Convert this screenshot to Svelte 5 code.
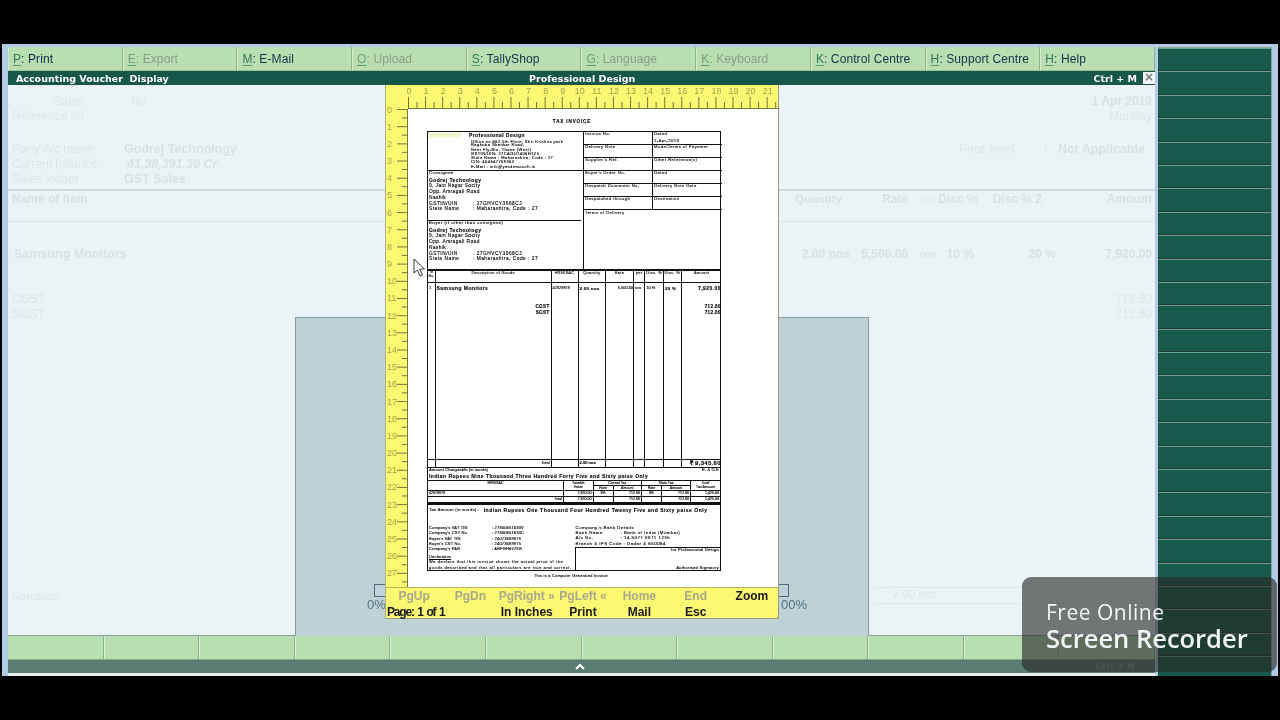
<script>
  const topButtons = [
    { key: "P", label: "Print", on: true },
    { key: "E", label: "Export" },
    { key: "M", label: "E-Mail", on: true },
    { key: "O", label: "Upload" },
    { key: "S", label: "TallyShop", on: true },
    { key: "G", label: "Language" },
    { key: "K", label: "Keyboard" },
    { key: "K", label: "Control Centre", on: true },
    { key: "H", label: "Support Centre", on: true },
    { key: "H", label: "Help", on: true }
  ];
  const sideRows = Array.from({ length: 27 });
  const bottomCells = Array.from({ length: 12 });

  const cmX = Array.from({ length: 22 }, (_, i) => i);
  const cmY = Array.from({ length: 28 }, (_, i) => i);
  const stepX = 17.08;
  const stepY = 17.18;

  const upper = [
    { label: "PgUp" },
    { label: "PgDn" },
    { label: "PgRight »" },
    { label: "PgLeft «" },
    { label: "Home" },
    { label: "End" },
    { label: "Zoom", on: true }
  ];
  const lower = ["In Inches", "Print", "Mail", "Esc", ""];

  const details = [
    ["Invoice No.", "Dated", "1-Apr-2019"],
    ["Delivery Note", "Mode/Terms of Payment", ""],
    ["Supplier's Ref.", "Other Reference(s)", ""],
    ["Buyer's Order No.", "Dated", ""],
    ["Despatch Document No.", "Delivery Note Date", ""],
    ["Despatched through", "Destination", ""]
  ];
  const party = ["9, Jain Nagar Socity", "Opp. Amragali Road", "Nashik"];
  const statutory = [
    ["Company's VAT TIN", "27800651630V"],
    ["Company's CST No.", "27800651630C"],
    ["Buyer's VAT TIN", "24073688975"],
    ["Buyer's CST No.", "24073688975"],
    ["Company's PAN", "ABFGH6578G"]
  ];
</script>

<div class="screen">
  <div class="window">
    <div class="main">
      <nav class="topbar">
        {#each topButtons as b}
          <div class="topbtn" class:on={b.on}><u>{b.key}</u>: {b.label}</div>
        {/each}
      </nav>
      <header class="titlebar">
        <span class="t-left">Accounting Voucher&nbsp; Display</span>
        <span class="t-mid">Professional Design</span>
        <span class="t-right">Ctrl + M</span>
        <span class="close">×</span>
      </header>

      <section class="form">
        <div class="line meta">
          <span class="sales">Sales</span><span class="no">No</span>
          <b class="end">1 Apr 2019</b>
        </div>
        <div class="line meta">
          <span>Reference no</span>
          <span class="end">Monday</span>
        </div>
        <div class="line party first">
          <span class="lab">Party A/c name</span><b>Godrej Technology</b>
          <span class="price">Price level</span><sup>1</sup><b class="na">Not Applicable</b>
        </div>
        <div class="line party">
          <span class="lab">Current balance</span><b class="bal">41,38,391.30 Cr</b>
        </div>
        <div class="line party">
          <span class="lab">Sales ledger</span><b>GST Sales</b>
        </div>

        <div class="cols heads">
          <b class="nh">Name of Item</b>
          <b class="r qh">Quantity</b>
          <b class="r">Rate</b>
          <span class="per">per</span>
          <b class="r dh">Disc %</b>
          <b class="r d2h">Disc % 2</b>
          <b class="r">Amount</b>
        </div>
        <div class="cols item">
          <b class="nm">Samsung Monitors</b>
          <b class="r">2.00 nos</b>
          <b class="r">5,500.00</b>
          <b class="per">nos</b>
          <b class="r">10 %</b>
          <b class="r">20 %</b>
          <b class="r">7,920.00</b>
        </div>
        <div class="line tax first"><span>CGST</span><span class="end">712.80</span></div>
        <div class="line tax"><span>SGST</span><span class="end">712.80</span></div>

        <div class="foot">
          <span>Narration</span>
          <div class="totals"><span>2.00 nos</span></div>
        </div>
      </section>

      <div class="bottombar">
        {#each bottomCells as _}
          <div class="bottomcell"></div>
        {/each}
      </div>
      <div class="statusbar">
        <svg class="chevron" width="10" height="7" viewBox="0 0 10 7"><path d="M1 6 L5 2 L9 6" fill="none" stroke="#fff" stroke-width="2"/></svg>
        <span class="ctrl">Ctrl + N</span>
      </div>
      <div class="whiteline"></div>
    </div>

    <aside class="side">
      {#each sideRows as _}
        <div class="siderow"></div>
      {/each}
    </aside>
  </div>

  <!-- print dialog behind the preview -->
  <div class="dialog">
    <div class="box box-l"></div>
    <span class="pct pct-l">0%</span>
    <div class="box box-r"></div>
    <span class="pct pct-r">00%</span>
  </div>

  <!-- yellow preview window -->
  <div class="preview">
    <svg class="ruler-top" width="394" height="24">
      <line x1="23" y1="23.5" x2="394" y2="23.5" stroke="#77773a" />
      {#each cmX as n}
        <text x={24 + n * stepX} y="9" text-anchor="middle">{n}</text>
        <line x1={23.5 + n * stepX} y1="12" x2={23.5 + n * stepX} y2="23" stroke="#77773a" />
        <line x1={32 + n * stepX} y1="17" x2={32 + n * stepX} y2="23" stroke="#77773a" />
      {/each}
    </svg>
    <div class="preview-body">
      <svg class="ruler-left" width="23" height="478">
        <line x1="22.5" y1="0" x2="22.5" y2="478" stroke="#77773a" />
        {#each cmY as n}
          <text x="2" y={n * stepY + 3.5}>{n}</text>
          <line x1="12" y1={0.5 + n * stepY} x2="23" y2={0.5 + n * stepY} stroke="#77773a" />
          <line x1="17" y1={9 + n * stepY} x2="23" y2={9 + n * stepY} stroke="#77773a" />
        {/each}
      </svg>

      <div class="page">
        <div class="doc-title">TAX INVOICE</div>
        <div class="inv">
          <div class="top">
            <div class="top-left">
              <div class="company">
                <div class="logo"></div>
                <div class="co-text">
                  <b class="big co-name">Professional Design</b>
                  <p>Office no.662,5th Floor, Shri Krishna park</p>
                  <p>Raghuba Shankar Road,</p>
                  <p class="gap">Near Fly-Bin, Thane (West)</p>
                  <p>GSTIN/UIN: 27CAGU1406H1Z5</p>
                  <p>State Name : Maharashtra, Code : 27</p>
                  <p class="gap">CIN: 464647708363</p>
                  <p class="gap">E-Mail : info@yesdemosoft.in</p>
                </div>
              </div>
              <div class="addr consignee">
                <p class="cap">Consignee</p>
                <b class="big">Godrej Technology</b>
                {#each party as line}<p class="wide">{line}</p>{/each}
                <p class="kv"><span>GSTIN/UIN</span><span>: 27GHVCY3968CJ</span></p>
                <p class="kv"><span>State Name</span><span>: Maharashtra, Code : 27</span></p>
              </div>
              <div class="addr buyer">
                <p class="cap">Buyer (if other than consignee)</p>
                <b class="big">Godrej Technology</b>
                {#each party as line}<p class="wide">{line}</p>{/each}
                <p class="kv"><span>GSTIN/UIN</span><span>: 27GHVCY3968CJ</span></p>
                <p class="kv"><span>State Name</span><span>: Maharashtra, Code : 27</span></p>
              </div>
            </div>
            <div class="top-right">
              {#each details as row}
                <div class="detail">
                  <div><p>{row[0]}</p></div>
                  <div><p>{row[1]}</p>{#if row[2]}<p class="val">{row[2]}</p>{/if}</div>
                </div>
              {/each}
              <div class="terms"><p>Terms of Delivery</p></div>
            </div>
          </div>

          <div class="igrid ihead">
            <div class="sl"><p>Sl</p><p>No.</p></div>
            <div>Description of Goods</div>
            <div>HSN/SAC</div>
            <div>Quantity</div>
            <div>Rate</div>
            <div>per</div>
            <div>Disc. %</div>
            <div>Disc. %</div>
            <div>Amount</div>
          </div>
          <div class="igrid ibody">
            <div>1</div>
            <div class="desc">
              <b class="big">Samsung Monitors</b>
              <b class="taxname cg">CGST</b>
              <b class="taxname">SGST</b>
            </div>
            <div class="hsn">42829878</div>
            <div class="qty"><b>2.00 nos</b></div>
            <div class="hsn rt">5,500.00</div>
            <div class="hsn">nos</div>
            <div class="hsn">10 %</div>
            <div class="qty"><b>20 %</b></div>
            <div class="amt">
              <b class="big">7,920.00</b>
              <b class="taxname cg">712.80</b>
              <b class="taxname">712.80</b>
            </div>
          </div>
          <div class="igrid itotal">
            <div></div>
            <div class="rt">Total</div>
            <div></div>
            <div><b>2.00 nos</b></div>
            <div></div><div></div><div></div><div></div>
            <div class="grand"><b>₹ 9,345.60</b></div>
          </div>

          <div class="lower">
            <div class="words"><span>Amount Chargeable (in words)</span><span>E. &amp; O.E</span></div>
            <b class="big words-val">Indian Rupees Nine Thousand Three Hundred Forty Five and Sixty paise Only</b>

            <div class="taxgrid">
              <div class="span2 ctr">HSN/SAC</div>
              <div class="span2 ctr">Taxable<br />Value</div>
              <div class="h2 ctr">Central Tax</div>
              <div class="h2 ctr">State Tax</div>
              <div class="span2 ctr">Total<br />Tax Amount</div>
              <div class="ctr">Rate</div><div class="ctr">Amount</div>
              <div class="ctr">Rate</div><div class="ctr">Amount</div>
              <div>42829878</div><div class="rt">7,920.00</div><div class="ctr">9%</div><div class="rt">712.80</div><div class="ctr">9%</div><div class="rt">712.80</div><div class="rt">1,425.60</div>
              <div class="rt">Total</div><div class="rt">7,920.00</div><div></div><div class="rt">712.80</div><div></div><div class="rt">712.80</div><div class="rt">1,425.60</div>
            </div>

            <div class="taxwords"><span>Tax Amount (in words) :</span><b class="big">Indian Rupees One Thousand Four Hundred Twenty Five and Sixty paise Only</b></div>

            <div class="closing">
              <div class="close-left">
                {#each statutory as row}
                  <p class="kv2"><span>{row[0]}</span><span>: {row[1]}</span></p>
                {/each}
                <p class="decl"><u>Declaration</u></p>
                <p class="long">We declare that this invoice shows the actual price of the</p>
                <p class="long">goods described and that all particulars are true and correct.</p>
              </div>
              <div class="close-right">
                <div class="bank">
                  <p>Company's Bank Details</p>
                  <p class="kv3"><span>Bank Name</span><span>: Bank of India (Mumbai)</span></p>
                  <p class="kv3"><span>A/c No.</span><span>: 14.5077 8871 1255</span></p>
                  <p>Branch &amp; IFS Code : Dadar &amp; 650064</p>
                </div>
                <div class="sign">
                  <p>for Professional Design</p>
                  <p>Authorised Signatory</p>
                </div>
              </div>
            </div>
          </div>
        </div>
        <div class="generated">This is a Computer Generated Invoice</div>
      </div>
    </div>

    <div class="keys">
      {#each upper as k}
        <span class:on={k.on}>{k.label}</span>
      {/each}
      <span class="on pageno">Page: 1 of 1</span>
      {#each lower as k}
        <span class="on">{k}</span>
      {/each}
    </div>
  </div>

  <!-- mouse pointer -->
  <svg class="cursor" width="13" height="19" viewBox="0 0 13 19">
    <path d="M1 1 L1 15 L4.4 12 L7 18 L9.4 17 L6.8 11.2 L11.5 11 Z" fill="#fff" stroke="#3a3a3a" stroke-width="1"/>
  </svg>

  <div class="recorder">
    <span class="rec-1">Free Online</span>
    <span class="rec-2">Screen Recorder</span>
  </div>
</div>

<style>
  :global(body) {
    margin: 0;
    background: #000;
  }
  * {
    box-sizing: border-box;
  }
  p {
    margin: 0;
  }
  .screen {
    position: relative;
    width: 1280px;
    height: 720px;
    padding-top: 44px;
    background: #000;
    font-family: "Liberation Sans", Arial, sans-serif;
    overflow: hidden;
    filter: blur(0.35px);
  }
  .window {
    display: flex;
    gap: 3px;
    width: 1276px;
    height: 632px;
    margin: 0 2px;
    padding: 3px 6px 0;
    background: #b4cbe6;
  }
  .main {
    display: flex;
    flex-direction: column;
    width: 1147px;
    flex: none;
  }

  /* top buttons */
  .topbar {
    display: grid;
    grid-template-columns: repeat(10, 1fr);
    height: 24px;
    flex: none;
    background: #b9deb1;
  }
  .topbtn {
    padding: 4px 0 0 4px;
    font-size: 12px;
    letter-spacing: 0.1px;
    line-height: 16px;
    color: #86a088;
    border-right: 1px solid #8fb38c;
    border-left: 1px solid #d2eccc;
    border-bottom: 1px solid #9cc097;
    white-space: nowrap;
  }
  .topbtn.on {
    color: #16304a;
  }
  .topbtn u {
    color: #7c9b80;
    text-decoration-color: #5e9a70;
    text-underline-offset: 2px;
  }
  .topbtn.on u {
    color: #2f7a55;
  }

  .titlebar {
    position: relative;
    display: flex;
    align-items: center;
    justify-content: space-between;
    height: 14px;
    flex: none;
    padding: 0 18px 0 8px;
    background: #17574a;
    color: #fff;
    font-family: "DejaVu Sans", Verdana, sans-serif;
    font-weight: 700;
    font-size: 9.5px;
  }
  .t-mid {
    position: absolute;
    left: 521px;
  }
  .close {
    position: absolute;
    right: 0;
    top: 1px;
    width: 12px;
    height: 12px;
    background: #f4f6f6;
    color: #6c7c7c;
    font-size: 12px;
    line-height: 11px;
    text-align: center;
  }

  /* greyed voucher form */
  .form {
    display: flex;
    flex-direction: column;
    height: 551px;
    flex: none;
    padding-top: 8px;
    background: #eaf3f6;
    color: #dde6ea;
    font-size: 12px;
    border-bottom: 1px solid #8f9c9c;
  }
  .form b {
    color: #d8e2e6;
  }
  .line {
    display: flex;
    align-items: center;
    height: 15px;
    padding: 0 3px 0 4px;
    white-space: nowrap;
  }
  .end {
    margin-left: auto;
  }
  .sales {
    flex: none;
    margin-left: 40px;
    width: 79px;
    font-size: 13px;
  }
  .party.first {
    margin-top: 18px;
  }
  .party .lab {
    flex: none;
    width: 112px;
  }
  .party b {
    font-size: 12.5px;
  }
  .bal {
    margin-left: 3px;
    font-style: italic;
  }
  .price {
    flex: none;
    margin-left: 722px;
  }
  .party sup {
    margin-left: 29px;
    font-size: 10px;
  }
  .party .na {
    margin-left: 9px;
  }
  .cols {
    display: grid;
    grid-template-columns: 782px 60px 58px 30px 36px 82px 96px;
    white-space: nowrap;
  }
  .heads {
    align-items: center;
    height: 33px;
    margin-top: 3px;
    padding-bottom: 14px;
    border-top: 2px solid #ced9dd;
    border-bottom: 1px solid #dae4e8;
    font-size: 12px;
  }
  .nh {
    padding-left: 4px;
  }
  .r {
    text-align: right;
  }
  .qh {
    padding-right: 8px;
    font-size: 11.5px;
  }
  .d2h {
    padding-right: 14px;
  }
  .per {
    padding-left: 11px;
    font-size: 11px;
    font-weight: 400;
  }
  .item {
    align-items: center;
    height: 15px;
    margin-top: 24px;
    font-size: 12px;
  }
  .nm {
    padding-left: 6px;
    font-size: 12.5px;
  }
  .tax.first {
    margin-top: 30px;
  }
  .foot {
    display: flex;
    align-items: center;
    height: 17px;
    margin-top: auto;
    margin-bottom: 31px;
    padding-left: 4px;
    font-size: 11.5px;
  }
  .totals {
    width: 280px;
    height: 17px;
    margin-left: auto;
    padding-left: 18px;
    border-top: 1px solid #dfe8ea;
    border-bottom: 1px solid #dfe8ea;
  }

  .bottombar {
    display: grid;
    grid-template-columns: repeat(12, 1fr);
    height: 24px;
    flex: none;
    background: #b9deb1;
    border-bottom: 1px solid #88a888;
  }
  .bottomcell {
    border-right: 1px solid #8fae8d;
    box-shadow: 1px 0 0 #dcf0d6;
  }
  .statusbar {
    position: relative;
    height: 13px;
    flex: none;
    background: #5b7c72;
    font-size: 9px;
  }
  .chevron {
    position: absolute;
    left: 567px;
    top: 3px;
  }
  .ctrl {
    position: absolute;
    right: 20px;
    top: 1px;
    color: #7f9a92;
    font-family: "DejaVu Sans", sans-serif;
    font-weight: 700;
  }
  .whiteline {
    flex: 1;
    background: #e6eef0;
  }

  .side {
    flex: 1;
    display: flex;
    flex-direction: column;
    overflow: hidden;
    padding-top: 1px;
    border-right: 1px solid #8ea09c;
    background: #8ea09c;
  }
  .siderow {
    height: 23.4px;
    flex: none;
    background: #17594b;
    border-top: 1px solid #6ea392;
    border-bottom: 1px solid #1d3b33;
    border-left: 1px solid #2a4f45;
  }

  /* dialog under the preview */
  .dialog {
    position: absolute;
    left: 295px;
    top: 317px;
    width: 574px;
    height: 319px;
    background: #bfd2d7;
    border: 1px solid #8c9ca0;
    border-bottom: none;
  }
  .box {
    position: absolute;
    top: 266px;
    width: 13px;
    height: 13px;
    border: 1px solid #4c6c78;
  }
  .box-l {
    left: 78px;
  }
  .box-r {
    left: 480px;
  }
  .pct {
    position: absolute;
    top: 279px;
    font-size: 13px;
    line-height: 16px;
    color: #4f7180;
  }
  .pct-l {
    left: 71px;
  }
  .pct-r {
    left: 485px;
  }

  /* preview */
  .preview {
    position: absolute;
    left: 385px;
    top: 85px;
    display: flex;
    flex-direction: column;
    width: 394px;
    height: 534px;
    background: #fbf871;
    border-right: 1px solid #9a9a80;
    border-bottom: 1px solid #9a9a80;
    border-left: 1px solid #b0b090;
  }
  .ruler-top,
  .ruler-left {
    display: block;
    flex: none;
    overflow: visible;
    margin-left: -1px;
  }
  .ruler-top text,
  .ruler-left text {
    font-size: 9px;
    fill: #a3a24a;
  }
  .preview-body {
    display: flex;
    height: 478px;
    flex: none;
  }
  .page {
    width: 370px;
    padding: 0 0 0 19px;
    background: #fff;
    color: #000;
    font-size: 4.2px;
    line-height: 4.6px;
    white-space: nowrap;
    -webkit-text-stroke: 0.12px #000;
  }
  .doc-title {
    width: 290px;
    height: 22px;
    padding-top: 11px;
    text-align: center;
    font-size: 4.6px;
    font-weight: 700;
    letter-spacing: 0.85px;
  }
  .big {
    font-size: 5px;
    letter-spacing: 0.42px;
    font-weight: 700;
  }
  .inv {
    width: 294px;
  }
  .top {
    display: grid;
    grid-template-columns: 156px 138px;
    height: 140px;
    border: 1px solid #111;
    border-bottom-width: 2px;
  }
  .top-left {
    display: flex;
    flex-direction: column;
    border-right: 1px solid #111;
  }
  .company {
    display: flex;
    height: 39px;
    margin-right: -1px;
    border-bottom: 1px solid #111;
  }
  .logo {
    width: 33px;
    height: 5px;
    margin: 1px 9px 0 0;
    background: linear-gradient(180deg, #eef2c4, #f7f8e2);
  }
  .co-text {
    padding-top: 1px;
  }
  .co-text b {
    display: block;
    margin-bottom: 2px;
  }
  .co-name {
    margin-left: -1px;
  }
  .co-text p {
    padding-left: 1px;
    font-size: 4px;
    line-height: 3.6px;
    letter-spacing: 0.45px;
  }
  .co-text .gap {
    margin-top: 1px;
    line-height: 4.2px;
  }
  .addr {
    display: flex;
    flex-direction: column;
    height: 50px;
    padding-left: 1px;
  }
  .consignee {
    border-bottom: 1px solid #111;
    margin-right: 2px;
  }
  .buyer {
    height: 49px;
  }
  .addr .cap {
    height: 5px;
    line-height: 3px;
    letter-spacing: 0.55px;
    margin-bottom: 1.5px;
  }
  .addr b,
  .addr .wide,
  .addr .kv {
    line-height: 5.8px;
  }
  .addr .wide {
    letter-spacing: 0.42px;
    font-size: 4.8px;
  }
  .addr .kv {
    display: flex;
    font-size: 4.8px;
    letter-spacing: 0.5px;
  }
  .kv span:first-child {
    width: 44px;
  }
  .top-right {
    display: flex;
    flex-direction: column;
  }
  .detail {
    display: grid;
    grid-template-columns: 69px 69px;
    height: 13px;
    border-bottom: 1px solid #111;
  }
  .detail > div {
    padding-left: 1px;
    color: #222;
    line-height: 3.8px;
    font-size: 4.2px;
    letter-spacing: 0.42px;
  }
  .detail > div:first-child {
    border-right: 1px solid #111;
  }
  .detail .val {
    margin-top: 3px;
    color: #111;
  }
  .detail:nth-child(4) {
    height: 13.3px;
  }
  .terms {
    padding: 1px;
    font-size: 4.2px;
    letter-spacing: 0.42px;
    color: #222;
  }
  .igrid {
    display: grid;
    grid-template-columns: 7.6px 116px 27px 27.4px 28px 11.4px 18.6px 17.6px 40.3px;
    border-left: 1px solid #111;
    border-right: 1px solid #111;
  }
  .igrid > div {
    border-right: 1px solid #111;
  }
  .igrid > div:last-child {
    border-right: none;
  }
  .ihead {
    height: 11.5px;
    border-bottom: 1px solid #111;
    text-align: center;
    color: #222;
    font-size: 4px;
    line-height: 3.6px;
    letter-spacing: 0.3px;
  }
  .sl {
    font-size: 3.6px;
    line-height: 3.8px;
    letter-spacing: 0;
  }
  .ibody {
    height: 177.5px;
    border-bottom: 1px solid #111;
    padding: 0;
  }
  .ibody > div {
    padding-top: 3px;
    padding-left: 1px;
  }
  .desc,
  .amt {
    display: flex;
    flex-direction: column;
    padding-right: 1px;
    line-height: 5px;
  }
  .amt {
    align-items: flex-end;
  }
  .taxname {
    align-self: flex-end;
    font-size: 4.6px;
    line-height: 6px;
    letter-spacing: 0.35px;
  }
  .cg {
    margin-top: 13px;
  }
  .hsn {
    font-size: 3.9px;
  }
  .rt {
    text-align: right;
  }
  .qty {
    letter-spacing: 0.3px;
    font-size: 4.4px;
  }
  .ibody .qty {
    padding-top: 4px;
  }
  .itotal {
    height: 8px;
    border-bottom: 1px solid #111;
    line-height: 6px;
    font-size: 4px;
  }
  .itotal > div {
    padding: 0 1px;
  }
  .grand {
    text-align: right;
    font-size: 6px;
    letter-spacing: 0.3px;
  }
  .lower {
    display: flex;
    flex-direction: column;
    border: 1px solid #111;
    border-top: none;
    height: 103px;
    padding-top: 0;
  }
  .words {
    display: flex;
    justify-content: space-between;
    padding: 0 1px;
    height: 5px;
    line-height: 4px;
    letter-spacing: 0.08px;
  }
  .words-val {
    height: 8.5px;
    padding-left: 1px;
    line-height: 7px;
    letter-spacing: 0.48px;
  }
  .taxgrid {
    display: grid;
    grid-template-columns: 136px 29.6px 20px 28.4px 20px 29px 1fr;
    grid-template-rows: 5px 5px 6px 6px;
    margin-left: -1px;
    margin-right: -1px;
    border: 1px solid #111;
    border-bottom: 2px solid #111;
    font-size: 3.6px;
    line-height: 4px;
  }
  .taxgrid > div {
    padding: 0 1px;
    border-right: 1px solid #111;
    border-bottom: 1px solid #111;
    overflow: hidden;
  }
  .taxgrid .ctr {
    text-align: center;
  }
  .span2 {
    grid-row: span 2;
  }
  .h2 {
    grid-column: span 2;
  }
  .taxgrid > div:nth-child(5),
  .taxgrid > div:nth-child(16),
  .taxgrid > div:nth-child(23) {
    border-right: none;
  }
  .taxwords {
    display: flex;
    gap: 4px;
    height: 21px;
    padding: 3px 0 0 1px;
    letter-spacing: 0.3px;
  }
  .taxwords b {
    letter-spacing: 0.54px;
  }
  .closing {
    display: flex;
    flex: 1;
  }
  .close-left {
    width: 146.5px;
    padding-left: 1px;
    font-size: 4px;
    line-height: 5.4px;
    letter-spacing: 0.18px;
  }
  .close-left .long {
    letter-spacing: 0.58px;
  }
  .kv2 {
    display: flex;
  }
  .kv2 span:first-child {
    width: 63px;
  }
  .decl {
    margin-top: 2px;
  }
  .close-right {
    display: flex;
    flex-direction: column;
    flex: 1;
  }
  .bank {
    padding: 0 0 0 1px;
    height: 22px;
    line-height: 5.3px;
    font-size: 4.4px;
    letter-spacing: 0.5px;
  }
  .kv3 {
    display: flex;
  }
  .kv3 span:first-child {
    width: 45px;
  }
  .sign {
    display: flex;
    flex-direction: column;
    justify-content: space-between;
    flex: 1;
    padding: 0 1px;
    border-top: 1px solid #111;
    border-left: 1px solid #111;
    text-align: right;
    line-height: 3.8px;
    letter-spacing: 0.2px;
  }
  .generated {
    width: 288px;
    margin-top: 3px;
    text-align: center;
    font-size: 3.8px;
    letter-spacing: 0.28px;
  }

  .keys {
    display: grid;
    grid-template-columns: repeat(7, 56.3px);
    grid-template-rows: 16px 16px;
    flex: 1;
    border-top: 1px solid #b5b25a;
    font-size: 12px;
    font-weight: 700;
    line-height: 16px;
    text-align: center;
    color: #a8a88c;
  }
  .keys .on {
    color: #191919;
  }
  .keys .pageno {
    grid-column: span 2;
    padding-left: 1px;
    text-align: left;
    letter-spacing: -1.2px;
    word-spacing: 1.5px;
  }

  .cursor {
    position: absolute;
    left: 413px;
    top: 258px;
  }

  .recorder {
    position: absolute;
    left: 1022px;
    top: 577px;
    display: flex;
    flex-direction: column;
    width: 255px;
    height: 95px;
    padding: 22px 0 0 24px;
    border-radius: 9px;
    background: rgba(38, 38, 38, 0.62);
    color: #f2f6f6;
    font-family: "Open Sans", sans-serif;
    line-height: 26px;
  }
  .rec-1 {
    font-size: 21px;
    letter-spacing: 0.5px;
  }
  .rec-2 {
    font-size: 25.5px;
    font-weight: 600;
  }
</style>
